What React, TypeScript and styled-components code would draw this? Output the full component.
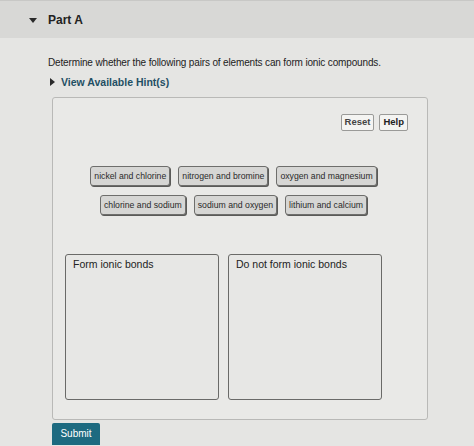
import styled, { createGlobalStyle } from 'styled-components'

const GlobalStyle = createGlobalStyle`
  html, body {
    margin: 0;
    padding: 0;
    background: #e5e5e3;
    font-family: "Liberation Sans", Arial, sans-serif;
    color: #1d1d1d;
  }
`

const pairs = [
  ['nickel and chlorine', 'nitrogen and bromine', 'oxygen and magnesium'],
  ['chlorine and sodium', 'sodium and oxygen', 'lithium and calcium'],
]

const Caret = ({ dir }: { dir: 'down' | 'right' }) => (
  <svg width="8" height="8" viewBox="0 0 8 8">
    {dir === 'down'
      ? <path d="M0 2 L8 2 L4 7 Z" fill="#2a2a2a" />
      : <path d="M2 0 L7 4 L2 8 Z" fill="#2a2a2a" />}
  </svg>
)

const App = () => {
  return (
    <Page>
      <GlobalStyle />
      <Header>
        <Caret dir="down" />
        <PartTitle>Part A</PartTitle>
      </Header>
      <Content>
        <Question>Determine whether the following pairs of elements can form ionic compounds.</Question>
        <HintLink>
          <Caret dir="right" />
          <span>View Available Hint(s)</span>
        </HintLink>
        <Workspace>
          <Toolbar>
            <ToolButton>Reset</ToolButton>
            <ToolButton bold>Help</ToolButton>
          </Toolbar>
          <ChipArea>
            {pairs.map((row, i) => (
              <ChipRow key={i}>
                {row.map(p => <Chip key={p}>{p}</Chip>)}
              </ChipRow>
            ))}
          </ChipArea>
          <Bins>
            <Bin>Form ionic bonds</Bin>
            <Bin>Do not form ionic bonds</Bin>
          </Bins>
        </Workspace>
        <SubmitButton>Submit</SubmitButton>
      </Content>
    </Page>
  )
}

export default App

const Page = styled.div`
  width: 474px;
  height: 446px;
  overflow: hidden;
`

const Header = styled.div`
  height: 38px;
  background: #d8d8d6;
  border-top: 1px solid #c8c8c6;
  display: flex;
  align-items: center;
  gap: 11px;
  padding-left: 29px;
  box-sizing: border-box;
`

const PartTitle = styled.div`
  font-size: 12px;
  font-weight: 600;
  color: #222;
`

const Content = styled.div`
  padding-left: 48px;
`

const Question = styled.div`
  margin-top: 19px;
  font-size: 10px;
  color: #222;
  letter-spacing: -0.15px;
`

const HintLink = styled.div`
  margin-top: 8px;
  display: flex;
  align-items: center;
  gap: 5px;
  font-size: 10.5px;
  font-weight: bold;
  color: #1f4f63;
`

const Workspace = styled.div`
  margin-top: 9px;
  margin-left: 4px;
  width: 376px;
  height: 323px;
  box-sizing: border-box;
  border: 1px solid #b9b9b7;
  border-radius: 3px;
  background: #e9e9e7;
  padding: 16px 19px 0 12px;
`

const Toolbar = styled.div`
  display: flex;
  justify-content: flex-end;
  gap: 5px;
`

const ToolButton = styled.div<{ bold?: boolean }>`
  height: 15px;
  line-height: 14px;
  padding: 0 3px;
  font-size: 9.5px;
  font-weight: ${p => (p.bold ? 'bold' : 600)};
  color: ${p => (p.bold ? '#222' : '#444')};
  background: #f4f4f2;
  border: 1px solid #9a9a98;
  border-radius: 2px;
`

const ChipArea = styled.div`
  margin-top: 35px;
  display: flex;
  flex-direction: column;
  align-items: center;
  gap: 9px;
  padding-right: 6px;
`

const ChipRow = styled.div`
  display: flex;
  gap: 8px;
`

const Chip = styled.div`
  height: 20px;
  line-height: 19px;
  padding: 0 3px;
  font-size: 8.7px;
  color: #2a2a2a;
  background: #d6d6d4;
  border: 1px solid #6e6e6c;
  border-radius: 3px;
  box-shadow: 1px 1px 0 #5a5a58;
  box-sizing: border-box;
`

const Bins = styled.div`
  margin-top: 39px;
  display: flex;
  gap: 9px;
`

const Bin = styled.div`
  width: 154px;
  height: 146px;
  box-sizing: border-box;
  border: 1px solid #6a6a68;
  border-radius: 3px;
  background: #e7e7e5;
  padding: 3px 7px;
  font-size: 10.5px;
  color: #222;
`

const SubmitButton = styled.div`
  margin-top: 3px;
  margin-left: 4px;
  width: 48px;
  height: 22px;
  line-height: 21px;
  text-align: center;
  background: #1d6a80;
  color: #fff;
  font-size: 10px;
  border-radius: 2px 2px 0 0;
`
